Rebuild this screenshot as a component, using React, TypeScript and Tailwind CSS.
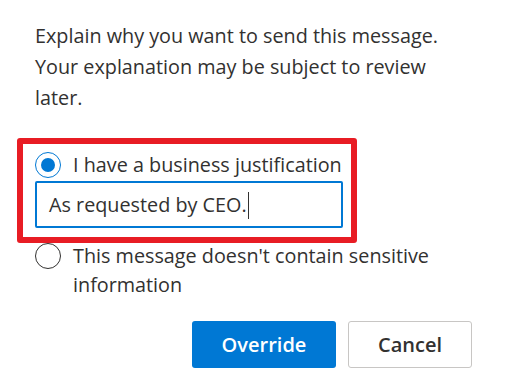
import React from 'react';

const Radio: React.FC<{ checked?: boolean }> = ({ checked }) => (
  <span
    className={
      checked
        ? 'flex h-[26px] w-[26px] shrink-0 items-center justify-center rounded-full border border-[#0078d4] bg-white'
        : 'flex h-[26px] w-[26px] shrink-0 items-center justify-center rounded-full border border-[#323130] bg-white'
    }
  >
    {checked && <span className="h-[14px] w-[14px] rounded-full bg-[#0078d4]" />}
  </span>
);

export default function App() {
  return (
    <div
      className="min-h-screen w-[507px] bg-white pl-[35px] pr-[35px] pt-[20px] text-[#323130]"
      style={{ fontFamily: '"Open Sans", "Noto Sans", sans-serif' }}
    >
      <p className="text-[19.8px] leading-[31px]">
        Explain why you want to send this message. Your explanation may be subject to review later.
      </p>

      {/* highlighted choice */}
      <div className="ml-[-18px] mt-[25px] w-[340px] rounded-[3px] border-[6px] border-[#e81c24] pb-[9px] pl-[12px] pt-[6px]">
        <label className="flex h-[30px] items-center gap-[12px]">
          <Radio checked />
          <span className="text-[19.8px] leading-[30px]">I have a business justification</span>
        </label>
        <div className="mt-[1px] flex h-[47px] w-[308px] items-center rounded-[2px] border-2 border-[#0078d4] px-[12px]">
          <span className="text-[19.8px] leading-[30px]">As requested by CEO.</span>
          <span className="ml-[1px] mt-[2px] h-[27px] w-px bg-[#323130]" />
        </div>
      </div>

      <label className="-mt-[2px] flex items-start gap-[12px]">
        <span className="pt-[2px]">
          <Radio />
        </span>
        <span className="text-[19.8px] leading-[29px]">
          This message doesn't contain sensitive information
        </span>
      </label>

      <div className="mt-[22px] flex justify-end gap-[12px]">
        <button className="h-[47px] w-[144px] rounded-[3px] bg-[#0078d4] text-[20px] font-semibold text-white">
          Override
        </button>
        <button className="h-[47px] w-[124px] rounded-[3px] border border-[#c8c6c4] bg-white text-[20px] font-semibold text-[#323130]">
          Cancel
        </button>
      </div>
    </div>
  );
}
